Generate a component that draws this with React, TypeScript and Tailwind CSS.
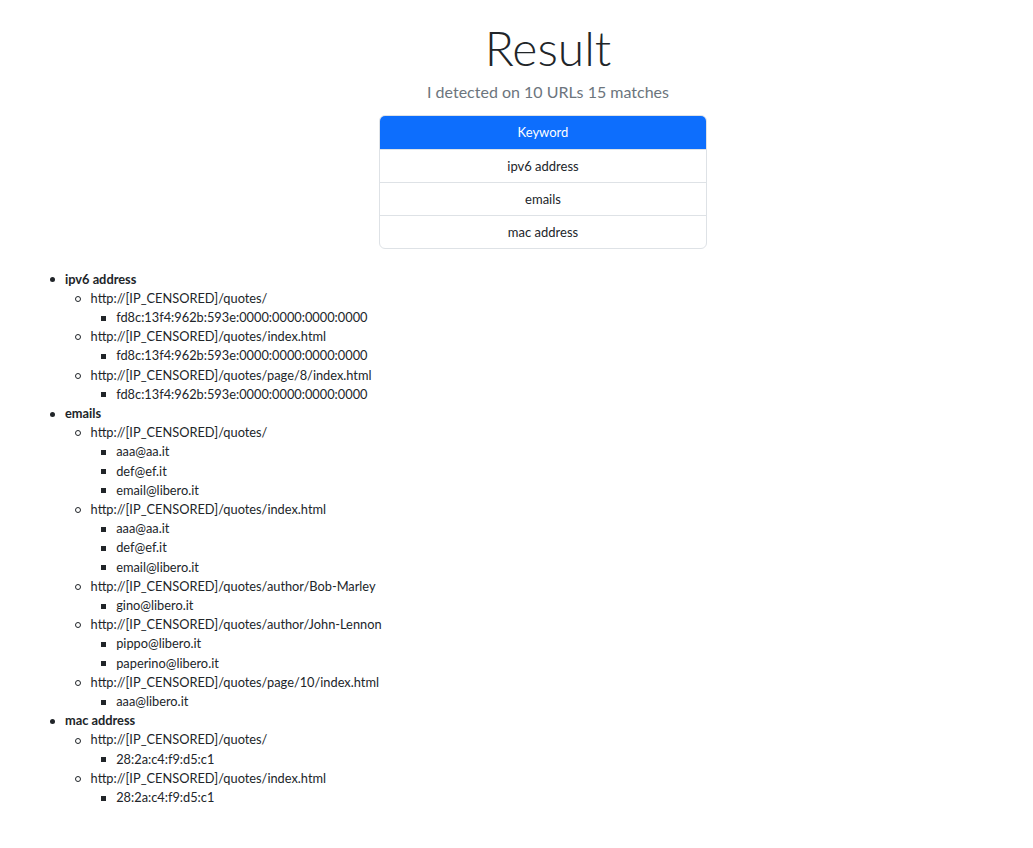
import React from "react";

interface UrlEntry {
  url: string;
  matches: string[];
}

interface KeywordGroup {
  keyword: string;
  urls: UrlEntry[];
}

const BASE = "http://[IP_CENSORED]/quotes";
const IPV6 = "fd8c:13f4:962b:593e:0000:0000:0000:0000";

const results: KeywordGroup[] = [
  {
    keyword: "ipv6 address",
    urls: [
      { url: `${BASE}/`, matches: [IPV6] },
      { url: `${BASE}/index.html`, matches: [IPV6] },
      { url: `${BASE}/page/8/index.html`, matches: [IPV6] },
    ],
  },
  {
    keyword: "emails",
    urls: [
      { url: `${BASE}/`, matches: ["aaa@aa.it", "def@ef.it", "email@libero.it"] },
      { url: `${BASE}/index.html`, matches: ["aaa@aa.it", "def@ef.it", "email@libero.it"] },
      { url: `${BASE}/author/Bob-Marley`, matches: ["gino@libero.it"] },
      { url: `${BASE}/author/John-Lennon`, matches: ["pippo@libero.it", "paperino@libero.it"] },
      { url: `${BASE}/page/10/index.html`, matches: ["aaa@libero.it"] },
    ],
  },
  {
    keyword: "mac address",
    urls: [
      { url: `${BASE}/`, matches: ["28:2a:c4:f9:d5:c1"] },
      { url: `${BASE}/index.html`, matches: ["28:2a:c4:f9:d5:c1"] },
    ],
  },
];

type Marker = "disc" | "circle" | "square";

function Bullet({ kind }: { kind: Marker }) {
  return (
    <span className="flex h-[19.2px] w-[25.6px] shrink-0 items-center justify-end pt-[1px] pr-[10px]">
      {kind === "disc" && <span className="size-[5px] rounded-full bg-[#212529]" />}
      {kind === "circle" && <span className="size-[6px] rounded-full border border-[#212529]" />}
      {kind === "square" && <span className="size-[5px] bg-[#212529]" />}
    </span>
  );
}

function Item({ kind, children }: { kind: Marker; children: React.ReactNode }) {
  return (
    <li className="flex">
      <Bullet kind={kind} />
      <div>{children}</div>
    </li>
  );
}

export default function App() {
  return (
    <div
      className="min-h-screen w-full bg-white text-[#212529]"
      style={{ fontFamily: 'Lato, "Noto Sans", sans-serif' }}
    >
      <div className="pl-[63px] pt-[19px] text-center">
        <h1 className="text-[48px] font-light leading-[1.2]">Result</h1>
        <p className="mt-[3px] text-[16px] leading-[24px] text-[#6c757d]">
          I detected on 10 URLs 15 matches
        </p>
      </div>

      <div className="ml-[379px] mt-[11px] w-[328px] overflow-hidden rounded-[6px] border border-[#dee2e6] text-center text-[13px]">
        <div className="flex h-[33px] items-center justify-center bg-[#0d6efd] pt-[2px] text-white">Keyword</div>
        <div className="flex h-[33px] items-center justify-center border-t border-[#dee2e6] pt-[2px]">ipv6 address</div>
        <div className="flex h-[33px] items-center justify-center border-t border-[#dee2e6] pt-[2px]">emails</div>
        <div className="flex h-[33px] items-center justify-center border-t border-[#dee2e6] pt-[2px]">mac address</div>
      </div>

      <ul className="mt-[21px] pl-[39.4px] text-[12.8px] leading-[19.2px]">
        {results.map((group) => (
          <Item key={group.keyword} kind="disc">
            <span className="font-bold">{group.keyword}</span>
            <ul>
              {group.urls.map((entry, i) => (
                <Item key={i} kind="circle">
                  {entry.url}
                  <ul>
                    {entry.matches.map((m, j) => (
                      <Item key={j} kind="square">
                        {m}
                      </Item>
                    ))}
                  </ul>
                </Item>
              ))}
            </ul>
          </Item>
        ))}
      </ul>
    </div>
  );
}
